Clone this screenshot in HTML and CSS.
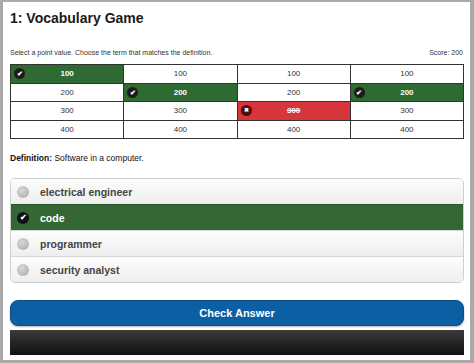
FILE: index.html
```html
<!DOCTYPE html>
<html lang="en">
<head>
<meta charset="UTF-8" />
<title>Vocabulary Game</title>
<link rel="stylesheet" href="styles.css">
</head>
<body>
    <div class="frame">
        <h1 class="title">1: Vocabulary Game</h1>

        <div class="info-row">
            <span>Select a point value. Choose the term that matches the definition.</span>
            <span class="score">Score: 200</span>
        </div>

        <table class="board">
            <tr>
                <td class="right"><span class="mark ok">&#10004;</span>100</td>
                <td>100</td>
                <td>100</td>
                <td>100</td>
            </tr>
            <tr>
                <td>200</td>
                <td class="right"><span class="mark ok">&#10004;</span>200</td>
                <td>200</td>
                <td class="right"><span class="mark ok">&#10004;</span>200</td>
            </tr>
            <tr>
                <td>300</td>
                <td>300</td>
                <td class="wrong"><span class="mark bad">&#10006;</span><s>300</s></td>
                <td>300</td>
            </tr>
            <tr>
                <td>400</td>
                <td>400</td>
                <td>400</td>
                <td>400</td>
            </tr>
        </table>

        <p class="definition"><b>Definition:</b> Software in a computer.</p>

        <ul class="choices">
            <li><span class="radio"></span>electrical engineer</li>
            <li class="picked"><span class="radio checked">&#10004;</span>code</li>
            <li><span class="radio"></span>programmer</li>
            <li><span class="radio"></span>security analyst</li>
        </ul>

        <button class="check-button">Check Answer</button>
        <div class="footer-bar"></div>
    </div>
</body>
</html>
```

FILE: styles.css
```css
html, body {
    margin: 0;
    padding: 0;
    height: 100%;
    overflow: hidden;
}

body {
    background: #a9a9a9;
    font-family: "Liberation Sans", Arial, sans-serif;
    color: #222;
}

.frame {
    box-sizing: border-box;
    margin: 2px 4px 3px 3px;
    height: 358px;
    background: #fff;
    padding: 0 6px 0 7px;
    display: flex;
    flex-direction: column;
}

.title {
    margin: 8px 0 0 0;
    font-size: 14px;
    font-weight: bold;
    color: #1a1a1a;
    line-height: 16px;
}

.info-row {
    display: flex;
    justify-content: space-between;
    font-size: 7px;
    color: #333;
    margin-top: 22px;
    line-height: 10px;
}

.score {
    margin-right: 1px;
}

.board {
    border-collapse: collapse;
    width: 454px;
    margin-top: 6px;
    table-layout: fixed;
}

.board td {
    border: 1px solid #333;
    height: 17.5px;
    padding: 0;
    text-align: center;
    font-size: 8px;
    color: #333;
    position: relative;
}

.board td.right {
    background: #2f6a32;
    color: #fff;
    font-weight: bold;
}

.board td.wrong {
    background: #d6363b;
    color: #fff;
    font-weight: bold;
}

.mark {
    position: absolute;
    left: 3px;
    top: 3px;
    width: 11px;
    height: 11px;
    border-radius: 50%;
    background: #1c1c1c;
    color: #fff;
    font-size: 7px;
    line-height: 11px;
    text-align: center;
    font-weight: bold;
}

.mark.bad {
    background: #4a1010;
    font-size: 6px;
}

.definition {
    font-size: 8.5px;
    margin: 13px 0 0 0;
    line-height: 12px;
    color: #111;
}

.choices {
    list-style: none;
    margin: 14px 0 0 0;
    padding: 0;
    border: 1px solid #cfcfcf;
    border-radius: 5px;
    overflow: hidden;
}

.choices li {
    height: 25px;
    display: flex;
    align-items: center;
    font-size: 10.5px;
    font-weight: bold;
    color: #444;
    background: linear-gradient(#fdfdfd, #eeeeee);
    border-top: 1px solid #d6d6d6;
}

.choices li:first-child {
    border-top: none;
}

.choices li.picked {
    background: #346733;
    color: #fff;
    border-top-color: #2a552a;
}

.radio {
    width: 12px;
    height: 12px;
    border-radius: 50%;
    background: radial-gradient(circle at 40% 35%, #d8d8d8, #a8a8a8);
    margin: 0 11px 0 6px;
    flex-shrink: 0;
}

.radio.checked {
    background: #111;
    color: #fff;
    font-size: 8px;
    line-height: 12px;
    text-align: center;
}

.check-button {
    margin-top: 17px;
    height: 26px;
    border: 1px solid #0b4f86;
    border-radius: 8px;
    background: #0c5fa3;
    color: #fff;
    font-family: "Liberation Sans", Arial, sans-serif;
    font-size: 11px;
    font-weight: bold;
    box-shadow: 0 1px 2px rgba(0,0,0,0.3);
}

.footer-bar {
    margin-top: 4px;
    height: 25px;
    background: linear-gradient(#3a3a3a, #111);
}
```
